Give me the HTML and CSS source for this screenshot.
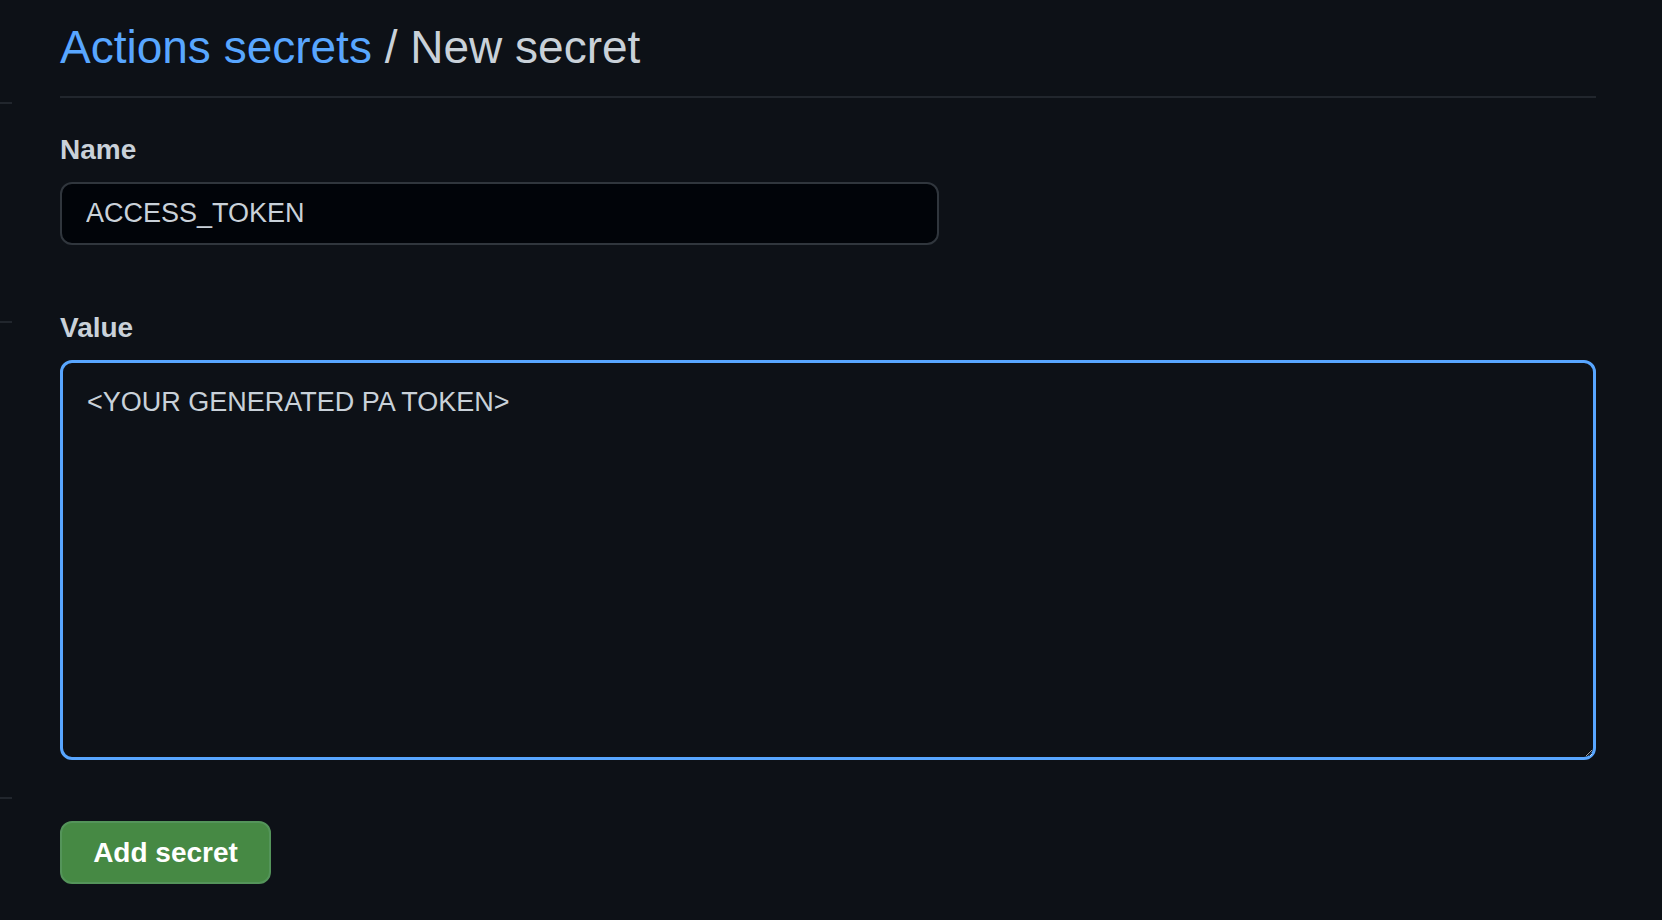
FILE: index.html
```html
<!DOCTYPE html>
<html lang="en">
<head>
<meta charset="utf-8">
<title>Actions secrets / New secret</title>
<link rel="stylesheet" href="styles.css">
</head>
<body>
<div class="layout">
  <aside class="sidebar">
    <div class="side-sec s1"></div>
    <div class="side-sec s2"></div>
    <div class="side-sec s3"></div>
  </aside>
  <main class="content">
    <div class="subhead">
      <h2 class="subhead-heading"><a class="crumb" href="#">Actions secrets</a> / New secret</h2>
    </div>
    <form class="secret-form">
      <div class="field">
        <label class="field-label" for="name">Name</label>
        <input class="name-input" id="name" type="text" value="ACCESS_TOKEN">
      </div>
      <div class="field">
        <label class="field-label" for="value">Value</label>
        <textarea class="value-input" id="value">&lt;YOUR GENERATED PA TOKEN&gt;</textarea>
      </div>
      <button class="btn-primary" type="button">Add secret</button>
    </form>
  </main>
</div>
</body>
</html>
```
FILE: styles.css
```css
html, body {
  margin: 0;
  padding: 0;
  background: #0d1117;
  color: #c9d1d9;
  font-family: "Liberation Sans", Arial, sans-serif;
  color-scheme: dark;
}

.layout {
  display: flex;
  min-height: 920px;
}

.sidebar {
  width: 12px;
  flex: none;
  display: flex;
  flex-direction: column;
}

.side-sec {
  border-bottom: 2px solid #21262d;
}

.s1 { height: 102px; }
.s2 { height: 217px; }
.s3 { height: 474px; }

.content {
  margin-left: 48px;
  width: 1536px;
}

.subhead {
  padding-top: 19px;
  padding-bottom: 20px;
  border-bottom: 2px solid #21262d;
}

.subhead-heading {
  margin: 0;
  font-size: 46px;
  font-weight: 400;
  line-height: 57px;
  color: #c9d1d9;
}

.crumb {
  color: #58a6ff;
  text-decoration: none;
}

.secret-form {
  display: flex;
  flex-direction: column;
  align-items: flex-start;
  padding-top: 31px;
}

.field {
  display: flex;
  flex-direction: column;
  width: 100%;
  margin-bottom: 61px;
}

.field:first-child {
  margin-bottom: 62px;
}

.field-label {
  font-size: 28px;
  font-weight: 700;
  line-height: 42px;
  margin-bottom: 11px;
  color: #c9d1d9;
}

.name-input {
  box-sizing: border-box;
  width: 879px;
  height: 63px;
  padding: 0 24px;
  background: #010409;
  border: 2px solid #30363d;
  border-radius: 12px;
  color: #c9d1d9;
  font-family: "Liberation Sans", Arial, sans-serif;
  font-size: 27px;
  outline: none;
}

.value-input {
  box-sizing: border-box;
  width: 1536px;
  height: 400px;
  padding: 20px 24px;
  background: #0d1117;
  border: 3px solid #58a6ff;
  border-radius: 12px;
  color: #c9d1d9;
  font-family: "Liberation Sans", Arial, sans-serif;
  font-size: 27px;
  line-height: 39px;
  outline: none;
  resize: vertical;
}

.btn-primary {
  box-sizing: border-box;
  width: 211px;
  height: 63px;
  background: #468944;
  border: 2px solid #54945a;
  border-radius: 12px;
  color: #ffffff;
  font-family: "Liberation Sans", Arial, sans-serif;
  font-size: 28px;
  font-weight: 700;
  cursor: pointer;
}
```
